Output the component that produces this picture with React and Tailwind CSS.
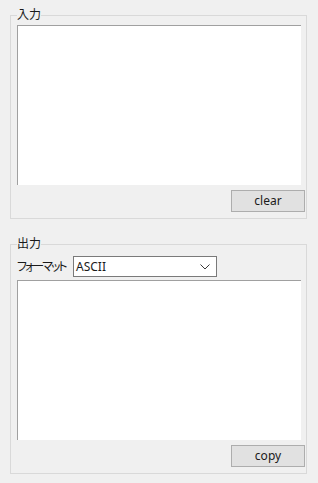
export default function App() {
  const font = "[font-family:'Noto_Sans','Noto_Sans_CJK_JP',sans-serif]";
  return (
    <div className={`min-h-screen w-[318px] bg-[#f0f0f0] pt-[8px] pl-[10px] text-[12px] text-[#1a1a1a] ${font}`}>
      <fieldset className="w-[297px] border border-[#d9d9d9] pl-[6px] pr-[1px] pb-[6px]">
        <legend className="leading-[14px] px-0 [font-feature-settings:'palt']">入力</legend>
        <textarea className="mt-[3px] block h-[160px] w-[284px] resize-none border-t border-l border-[#a0a0a0] bg-white outline-none" />
        <div className="mt-[5px] flex justify-end">
          <button className="h-[22px] w-[74px] border border-[#adadad] bg-[#e1e1e1] leading-[20px] text-[12px] text-[#1a1a1a]">
            clear
          </button>
        </div>
      </fieldset>

      <fieldset className="mt-[18px] w-[297px] border border-[#d9d9d9] pl-[6px] pr-[1px] pb-[6px]">
        <legend className="leading-[14px] px-0 [font-feature-settings:'palt']">出力</legend>
        <div className="mt-[5px] flex h-[21px] items-center">
          <span className="w-[56px] whitespace-nowrap tracking-[-2px] [font-feature-settings:'palt']">フォーマット</span>
          <div className="flex h-[21px] w-[144px] items-center justify-between border border-[#7a7a7a] bg-white pl-[2px] pr-[6px]">
            <span className="leading-[19px]">ASCII</span>
            <svg width="10" height="6" viewBox="0 0 10 6">
              <path d="M0.5 0.5 L5 5 L9.5 0.5" fill="none" stroke="#3a3a3a" strokeWidth="1" />
            </svg>
          </div>
        </div>
        <textarea className="mt-[3px] block h-[160px] w-[284px] resize-none border-t border-l border-[#a0a0a0] bg-white outline-none" />
        <div className="mt-[5px] flex justify-end">
          <button className="h-[22px] w-[74px] border border-[#adadad] bg-[#e1e1e1] leading-[20px] text-[12px] text-[#1a1a1a]">
            copy
          </button>
        </div>
      </fieldset>
    </div>
  );
}
